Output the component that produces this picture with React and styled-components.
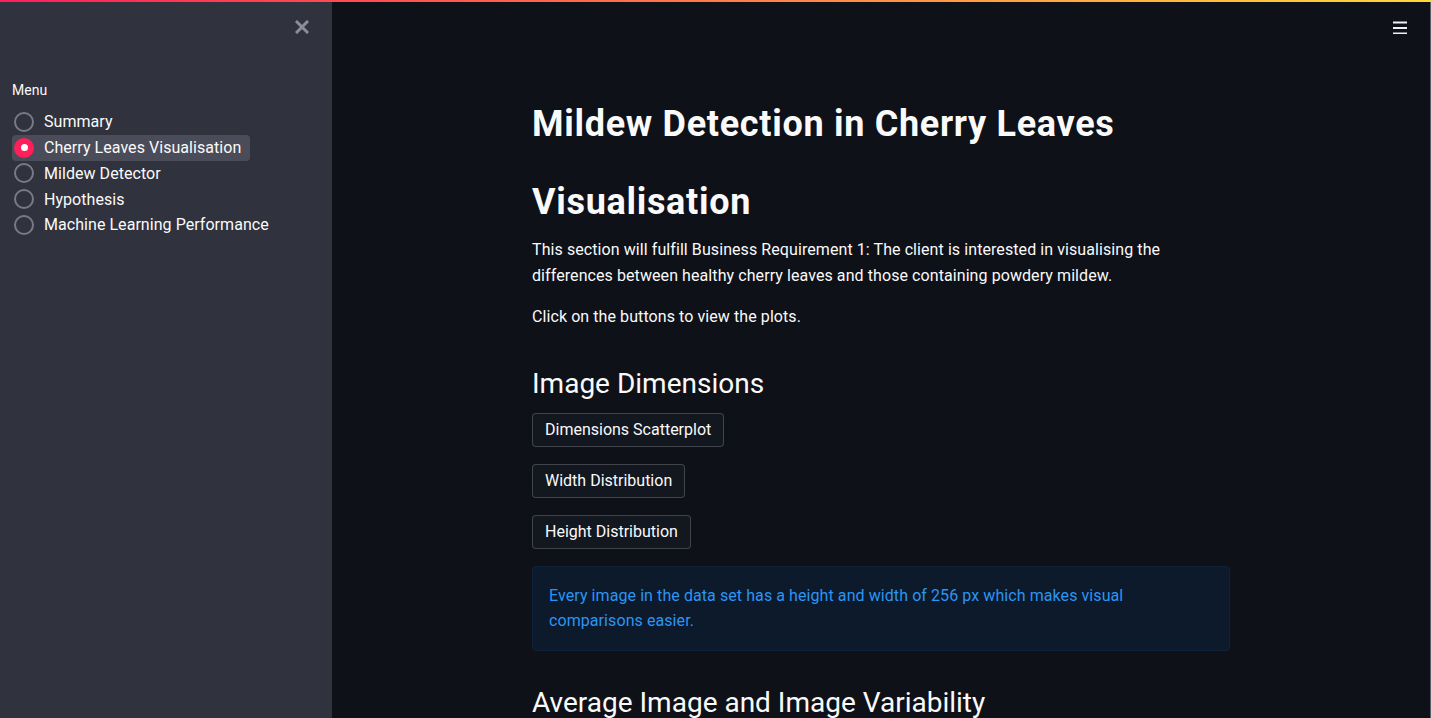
import React from 'react';
import styled, { createGlobalStyle } from 'styled-components';

const GlobalStyle = createGlobalStyle`
  html, body {
    margin: 0;
    padding: 0;
    background: #0e1118;
  }
  body {
    font-family: Roboto, "Noto Sans", sans-serif;
    color: #fafafa;
  }
  * {
    box-sizing: border-box;
  }
`;

const Page = styled('div')`
  display: flex;
  flex-direction: column;
  height: 718px;
  overflow: hidden;
`;

const Decoration = styled('div')`
  height: 2px;
  flex: none;
  background: linear-gradient(90deg, #ff1f5a, #ffd83a);
`;

const Body = styled('div')`
  display: flex;
  flex: 1;
  min-height: 0;
`;

const Sidebar = styled('aside')`
  width: 332px;
  flex: none;
  background: #30323e;
  padding: 0 12px;
  display: flex;
  flex-direction: column;
`;

const SidebarHeader = styled('div')`
  height: 50px;
  display: flex;
  align-items: center;
  justify-content: flex-end;
  padding-right: 11px;
`;

const CloseButton = styled('button')`
  background: transparent;
  border: none;
  padding: 0;
  display: flex;
  cursor: pointer;
`;

const MenuLabel = styled('div')`
  margin-top: 27px;
  font-size: 14px;
  line-height: 22px;
`;

const RadioList = styled('div')`
  margin-top: 8px;
  display: flex;
  flex-direction: column;
  align-items: flex-start;
`;

const RadioItem = styled('label')`
  display: inline-flex;
  align-items: center;
  gap: 10px;
  height: 25.75px;
  padding: 0 9px 0 2px;
  border-radius: 4px;
  font-size: 16px;
  letter-spacing: 0.05px;
  background: ${({ $active }) => ($active ? '#4b4c59' : 'transparent')};
  cursor: pointer;
`;

const RadioCircle = styled('span')`
  width: 20px;
  height: 20px;
  border-radius: 50%;
  display: flex;
  align-items: center;
  justify-content: center;
  border: ${({ $active }) => ($active ? 'none' : '2px solid #787a84')};
  background: ${({ $active }) => ($active ? '#ff1f5a' : 'transparent')};

  &::after {
    content: '';
    display: ${({ $active }) => ($active ? 'block' : 'none')};
    width: 7px;
    height: 7px;
    border-radius: 50%;
    background: #ffffff;
  }
`;

const Main = styled('main')`
  flex: 1;
  min-width: 0;
  background: #0e1118;
  border-right: 1px solid #5c5e68;
  display: flex;
  flex-direction: column;
`;

const MainHeader = styled('header')`
  height: 50px;
  flex: none;
  display: flex;
  align-items: center;
  justify-content: flex-end;
  padding-right: 23px;
`;

const MenuButton = styled('button')`
  background: transparent;
  border: none;
  padding: 0;
  display: flex;
  cursor: pointer;
`;

const Content = styled('div')`
  width: 698px;
  margin: 0 auto;
  padding-top: 51px;
`;

const Title = styled('h1')`
  margin: 0 0 ${({ $gap }) => $gap || 0}px;
  font-size: 36px;
  font-weight: 700;
  line-height: 43px;
  letter-spacing: 0.7px;
`;

const Paragraph = styled('p')`
  margin: 0 0 ${({ $gap }) => $gap || 0}px;
  font-size: 16px;
  line-height: 25.6px;
  letter-spacing: 0.08px;
`;

const SubHeading = styled('h3')`
  margin: 0 0 12px;
  font-size: 28px;
  font-weight: 400;
  line-height: 34px;
`;

const ButtonStack = styled('div')`
  display: flex;
  flex-direction: column;
  align-items: flex-start;
  gap: 17px;
  margin-bottom: 17px;
`;

const Button = styled('button')`
  font-family: inherit;
  font-size: 16px;
  line-height: 24px;
  color: #fafafa;
  background: #131720;
  border: 1px solid rgba(250, 250, 250, 0.2);
  border-radius: 4px;
  padding: 4px 12px;
  cursor: pointer;
`;

const InfoBox = styled('div')`
  background: #0c1a2c;
  border: 1px solid #10223a;
  border-radius: 4px;
  padding: 16px 16px;
  color: #2b95f3;
  font-size: 16px;
  line-height: 25.6px;
  letter-spacing: 0.08px;
  margin-bottom: 35px;
`;

const pages = [
  'Summary',
  'Cherry Leaves Visualisation',
  'Mildew Detector',
  'Hypothesis',
  'Machine Learning Performance',
];

const CloseIcon = () => (
  <svg width="14" height="14" viewBox="0 0 14 14">
    <path d="M2 2 L12 12 M12 2 L2 12" stroke="#8c8d96" strokeWidth="3" strokeLinecap="square" />
  </svg>
);

const HamburgerIcon = () => (
  <svg width="14" height="14" viewBox="0 0 14 14">
    <rect x="0" y="1.5" width="14" height="2" fill="#f0f0f2" />
    <rect x="0" y="7" width="14" height="2" fill="#f0f0f2" />
    <rect x="0" y="12.5" width="14" height="2" fill="#f0f0f2" />
  </svg>
);

export default function App() {
  const active = 'Cherry Leaves Visualisation';
  return (
    <Page>
      <GlobalStyle />
      <Decoration />
      <Body>
        <Sidebar>
          <SidebarHeader>
            <CloseButton aria-label="Close sidebar">
              <CloseIcon />
            </CloseButton>
          </SidebarHeader>
          <MenuLabel>Menu</MenuLabel>
          <RadioList>
            {pages.map((p) => (
              <RadioItem key={p} $active={p === active}>
                <RadioCircle $active={p === active} />
                {p}
              </RadioItem>
            ))}
          </RadioList>
        </Sidebar>
        <Main>
          <MainHeader>
            <MenuButton aria-label="Main menu">
              <HamburgerIcon />
            </MenuButton>
          </MainHeader>
          <Content>
            <Title $gap={35}>Mildew Detection in Cherry Leaves</Title>
            <Title $gap={13}>Visualisation</Title>
            <Paragraph $gap={16}>
              This section will fulfill Business Requirement 1: The client is interested in
              visualising the differences between healthy cherry leaves and those containing
              powdery mildew.
            </Paragraph>
            <Paragraph $gap={37}>Click on the buttons to view the plots.</Paragraph>
            <SubHeading>Image Dimensions</SubHeading>
            <ButtonStack>
              <Button>Dimensions Scatterplot</Button>
              <Button>Width Distribution</Button>
              <Button>Height Distribution</Button>
            </ButtonStack>
            <InfoBox>
              Every image in the data set has a height and width of 256 px which makes visual
              comparisons easier.
            </InfoBox>
            <SubHeading>Average Image and Image Variability</SubHeading>
          </Content>
        </Main>
      </Body>
    </Page>
  );
}
